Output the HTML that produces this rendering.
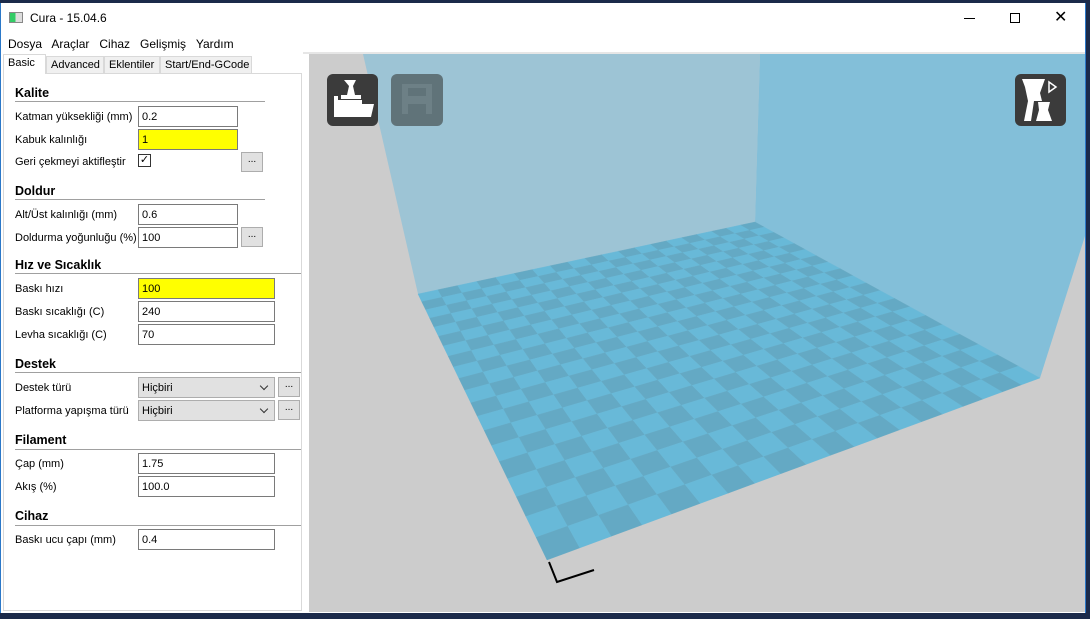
<!DOCTYPE html>
<html><head><meta charset="utf-8"><style>
*{box-sizing:border-box;margin:0;padding:0}
body{width:1090px;height:619px;overflow:hidden;background:#1b2a4a;font-family:"Liberation Sans",sans-serif;font-size:12px;color:#000;position:relative}
.abs{position:absolute;white-space:nowrap}
#win{left:0;top:3px;width:1086px;height:610px;background:#fff;border-left:1px solid #2b78c8;border-right:1px solid #2b78c8}
.lbl{position:absolute;left:15px;font-size:11px;line-height:14px;white-space:nowrap}
.h{position:absolute;left:15px;font-weight:bold;font-size:12.5px}
.ln{position:absolute;left:15px;height:1px;background:#a0a0a0}
.in{position:absolute;left:138px;height:21px;border:1px solid #7a7a7a;background:#fff;font-size:11px;line-height:19px;padding:1px 0 0 3px}
.y{background:#ffff00}
.btn{position:absolute;width:22px;height:20px;border:1px solid #adadad;background:#e1e1e1;font-size:10px;text-align:center;line-height:14px}
.sel{position:absolute;left:138px;width:137px;height:21px;border:1px solid #adadad;background:#e1e1e1;font-size:11px;line-height:19px;padding:1px 0 0 3px}
.sel:after{content:"";position:absolute;right:7px;top:5px;width:5px;height:5px;border-right:1px solid #333;border-bottom:1px solid #333;transform:rotate(45deg)}
.tab{position:absolute;top:56px;height:18px;border:1px solid #d9d9d9;background:#f0f0f0;font-size:11px;line-height:16px;padding:0 4px;white-space:nowrap;overflow:hidden}
</style></head><body>
<div id="win" class="abs"></div>
<div class="abs" style="left:9px;top:12px;width:14px;height:11px;border:1px solid #888;background:linear-gradient(90deg,#3c6 0 45%,#ddd 45%)"></div>
<div class="abs" style="left:30px;top:11px;font-size:12px">Cura - 15.04.6</div>
<div class="abs" style="left:964px;top:18px;width:11px;height:1px;background:#000"></div>
<div class="abs" style="left:1010px;top:13px;width:10px;height:10px;border:1px solid #000"></div>
<div class="abs" style="left:1054px;top:11px;font-size:16px;line-height:14px">✕</div>
<div class="abs" style="left:8px;top:37px;font-size:12px">Dosya&nbsp;&nbsp; Araçlar&nbsp;&nbsp; Cihaz&nbsp;&nbsp; Gelişmiş&nbsp;&nbsp; Yardım</div>
<div class="abs" style="left:3px;top:73px;width:299px;height:538px;border:1px solid #d9d9d9;background:#fff"></div>
<div class="tab" style="left:3px;top:54px;height:20px;background:#fff;border-bottom:none;width:43px;line-height:17px">Basic</div>
<div class="tab" style="left:46px;width:58px">Advanced</div>
<div class="tab" style="left:104px;width:56px">Eklentiler</div>
<div class="tab" style="left:160px;width:92px">Start/End-GCode</div>

<div class="h" style="top:86px">Kalite</div><div class="ln" style="top:101px;width:250px"></div>
<div class="lbl" style="top:110px">Katman yüksekliği (mm)</div><div class="in" style="top:106px;width:100px">0.2</div>
<div class="lbl" style="top:133px">Kabuk kalınlığı</div><div class="in y" style="top:129px;width:100px">1</div>
<div class="lbl" style="top:155px">Geri çekmeyi aktifleştir</div>
<div class="abs" style="left:138px;top:154px;width:13px;height:13px;border:1px solid #333;font-size:11px;line-height:11px;text-align:center">✓</div>
<div class="btn" style="left:241px;top:152px">...</div>

<div class="h" style="top:184px">Doldur</div><div class="ln" style="top:199px;width:250px"></div>
<div class="lbl" style="top:208px">Alt/Üst kalınlığı (mm)</div><div class="in" style="top:204px;width:100px">0.6</div>
<div class="lbl" style="top:231px">Doldurma yoğunluğu (%)</div><div class="in" style="top:227px;width:100px">100</div>
<div class="btn" style="left:241px;top:227px">...</div>

<div class="h" style="top:258px">Hız ve Sıcaklık</div><div class="ln" style="top:273px;width:286px"></div>
<div class="lbl" style="top:282px">Baskı hızı</div><div class="in y" style="top:278px;width:137px">100</div>
<div class="lbl" style="top:305px">Baskı sıcaklığı (C)</div><div class="in" style="top:301px;width:137px">240</div>
<div class="lbl" style="top:328px">Levha sıcaklığı (C)</div><div class="in" style="top:324px;width:137px">70</div>

<div class="h" style="top:357px">Destek</div><div class="ln" style="top:372px;width:286px"></div>
<div class="lbl" style="top:381px">Destek türü</div><div class="sel" style="top:377px">Hiçbiri</div><div class="btn" style="left:278px;top:377px">...</div>
<div class="lbl" style="top:404px">Platforma yapışma türü</div><div class="sel" style="top:400px">Hiçbiri</div><div class="btn" style="left:278px;top:400px">...</div>

<div class="h" style="top:433px">Filament</div><div class="ln" style="top:449px;width:286px"></div>
<div class="lbl" style="top:457px">Çap (mm)</div><div class="in" style="top:453px;width:137px">1.75</div>
<div class="lbl" style="top:480px">Akış (%)</div><div class="in" style="top:476px;width:137px">100.0</div>

<div class="h" style="top:509px">Cihaz</div><div class="ln" style="top:525px;width:286px"></div>
<div class="lbl" style="top:533px">Baskı ucu çapı (mm)</div><div class="in" style="top:529px;width:137px">0.4</div>

<div class="abs" style="left:303px;top:52px;width:782px;height:2px;background:#e6e6e6"></div>
<svg class="abs" style="left:0;top:0" width="1090" height="619">
<rect x="309" y="54" width="776" height="558" fill="#cccccc"/>
<polygon points="363,54 760,54 755,222 418,294" fill="#9dc4d5"/>
<polygon points="760,54 1085,54 1085,236 1040,378 755,222" fill="#83bfd9"/>
<g id="floor"></g>
<polyline points="549,562 557,582 594,570" fill="none" stroke="#000" stroke-width="2"/>
<rect x="327" y="74" width="51" height="52" rx="6" fill="#3b3b3b"/>
<path d="M344 80h12l-3 6 2 9h6v4h-20v-4h6l2-9z" fill="#fff"/>
<path d="M334 96h4v4h24v4h12l-3 13h-37z" fill="#fff"/>
<rect x="391" y="74" width="52" height="52" rx="6" fill="#607379"/>
<path d="M402 84h30v30h-6v-10h-18v10h-6z M408 88v8h18v-8z" fill="#6d8086" fill-rule="evenodd"/>
<rect x="1015" y="74" width="51" height="52" rx="6" fill="#3b3b3b"/>
<path d="M1022 79h23l-5 14 2 8h-8l-3 20h-7l4-20-3-14z" fill="#fff"/>
<path d="M1038 102h12l-2 8 4 11h-16l3-11z" fill="#fff"/>
<path d="M1049 82l7 5-7 5z" fill="none" stroke="#fff" stroke-width="1.5"/>
</svg>
<script>
(function(){
var X=[418,755,1040,547],Y=[294,222,378,560];
var dx1=X[1]-X[2],dx2=X[3]-X[2],dx3=X[0]-X[1]+X[2]-X[3];
var dy1=Y[1]-Y[2],dy2=Y[3]-Y[2],dy3=Y[0]-Y[1]+Y[2]-Y[3];
var den=dx1*dy2-dx2*dy1;
var g=(dx3*dy2-dx2*dy3)/den,h=(dx1*dy3-dx3*dy1)/den;
var a=X[1]-X[0]+g*X[1],b=X[3]-X[0]+h*X[3],c=X[0];
var d=Y[1]-Y[0]+g*Y[1],e=Y[3]-Y[0]+h*Y[3],f=Y[0];
function p(u,v){var w=g*u+h*v+1;return ((a*u+b*v+c)/w).toFixed(1)+","+((d*u+e*v+f)/w).toFixed(1);}
var N=20,s="";
for(var i=0;i<N;i++)for(var j=0;j<N;j++){
var u0=i/N,u1=(i+1)/N,v0=j/N,v1=(j+1)/N;
var col=(i+j)%2?'#64a9c4':'#68b9d8';
s+='<polygon points="'+p(u0,v0)+' '+p(u1,v0)+' '+p(u1,v1)+' '+p(u0,v1)+'" fill="'+col+'" stroke="'+col+'" stroke-width="0.4"/>';}
document.getElementById("floor").innerHTML=s;
})();
</script>
</body></html>
